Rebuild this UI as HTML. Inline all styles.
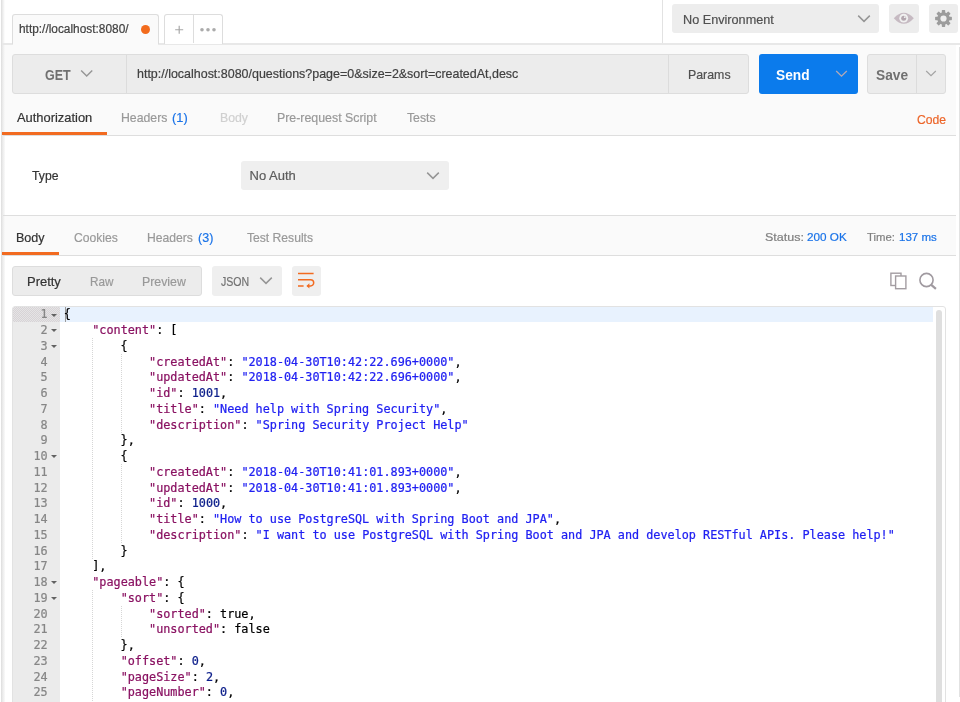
<!DOCTYPE html>
<html lang="en">
<head>
<meta charset="utf-8">
<title>Postman</title>
<style>
*{box-sizing:border-box;margin:0;padding:0}
html,body{width:960px;height:702px;overflow:hidden;background:#fff}
body{position:relative;font-family:"Liberation Sans",Arial,sans-serif;color:#505050;font-size:13px}
#root{position:absolute;left:0;top:0;width:960px;height:702px;will-change:transform}
.abs{position:absolute}
.t{position:absolute;white-space:nowrap;line-height:20px;height:20px;transform-origin:0 50%;-webkit-text-stroke:.2px}
/* frame */
#lshadow{left:1px;top:0;width:4px;height:702px;background:linear-gradient(90deg,#dcdcdc 0,#e9e9e9 35%,#fafafa 100%)}
#lshadowTop{left:1px;top:0;width:4px;height:43px;background:linear-gradient(90deg,#dcdcdc 0,#ececec 40%,#fff 100%)}
#rline{left:959px;top:47px;width:1px;height:650px;background:#e2e2e2}
.hline{position:absolute;height:1px;background:#dedede}
.band{position:absolute;left:3px;width:953px;background:#fafafa}
/* tabs */
.tab{position:absolute;top:14px;height:30px;background:#fafafa;border:1px solid #dddddd;border-bottom:none;border-radius:3px 3px 0 0}
/* buttons */
.btn{position:absolute;background:#ececec;border:1px solid #dddddd;border-radius:3px}
.flat{position:absolute;background:#efefef;border-radius:3px}
.o{color:#f26b3a}
.b{color:#1a73e8}
/* editor */
#ed{left:12px;top:305.5px;width:933.7px;height:420px;border:1px solid #e2e2e2;border-radius:3px;overflow:hidden;background:#fff}
#gut{left:0;top:0;width:46.5px;height:420px;background:#ebebeb}
#gact{left:0;top:0;width:46.5px;height:15.5px;background:repeating-conic-gradient(#d7d3d6 0 25%,#e5e4e5 0 50%) 0 0/2px 2px}
#lact{left:46.5px;top:0;width:873px;height:15.5px;background:#e8f2fe}
#nums,#code{position:absolute;top:.9px;font-family:"DejaVu Sans Mono","Liberation Mono",monospace;font-size:11.8px;line-height:15.75px;white-space:pre}
#nums{left:0;width:34.6px;text-align:right;color:#868686;-webkit-text-stroke:.2px}
#code{left:50.8px;color:#000;-webkit-text-stroke:.22px}
.k{color:#8a1262}
.s{color:#2020f2}
.n{color:#0b1d8a}
.fa{position:absolute;left:37.8px;width:0;height:0;border-left:3px solid transparent;border-right:3px solid transparent;border-top:3.4px solid #626262}
.ig{position:absolute;width:1px;background-image:linear-gradient(#d6d6d6 50%,transparent 50%);background-size:1px 2px}
</style>
</head>
<body>
<div id="root">
<!-- frame / backgrounds -->
<div class="band" style="top:45px;height:90px"></div>
<div class="band" style="top:216px;height:39px"></div>
<div class="abs" id="lshadow"></div>
<div class="abs" id="lshadowTop"></div>
<div class="abs" id="rline"></div>
<div class="hline" style="left:2px;top:43px;width:958px;height:2px;background:#e8e8e8"></div>
<div class="hline" style="left:3px;top:135px;width:953px"></div>
<div class="hline" style="left:3px;top:215px;width:953px"></div>
<div class="hline" style="left:3px;top:255px;width:953px"></div>

<!-- tab strip -->
<div class="tab" style="left:12px;width:147px;height:30px"></div>
<div class="abs" style="left:13px;top:43px;width:145px;height:2px;background:#fafafa"></div>
<div class="tab" style="left:164px;width:59px;height:30px;background:#fff"></div>
<div class="abs" style="left:140.8px;top:24.6px;width:9.2px;height:9.2px;border-radius:50%;background:#f26b1d"></div>
<div class="abs" style="left:193px;top:15px;width:1px;height:28px;background:#dddddd"></div>
<svg class="abs" style="left:173px;top:24px" width="12" height="12" viewBox="0 0 12 12"><path d="M6.2 1.7v8M2.2 5.7h8" stroke="#a6a6a6" stroke-width="1.15" fill="none"/></svg>
<svg class="abs" style="left:199px;top:26px" width="18" height="8" viewBox="0 0 18 8"><circle cx="3" cy="3.7" r="1.8" fill="#ababab"/><circle cx="9" cy="3.7" r="1.8" fill="#ababab"/><circle cx="15" cy="3.7" r="1.8" fill="#ababab"/></svg>

<!-- environment -->
<div class="abs" style="left:662px;top:0;width:1px;height:43px;background:#e2e2e2"></div>
<div class="flat" style="left:672px;top:4px;width:207px;height:29px;background:#ededed"></div>
<svg class="abs" style="left:857px;top:14px" width="14" height="10" viewBox="0 0 14 10"><path d="M1.2 1.6L7 7.4 12.8 1.6" stroke="#969696" stroke-width="1.5" fill="none"/></svg>
<div class="flat" style="left:889px;top:4px;width:30px;height:29px;background:#ededed"></div>
<svg class="abs" style="left:892px;top:11px" width="24" height="15" viewBox="892 11 24 15"><path d="M893.8 18.2Q903.8 7.2 913.8 18.2Q903.8 29.2 893.8 18.2Z" fill="#c6bac2"/><circle cx="903.7" cy="18.2" r="4.4" fill="#f0f0f0"/><circle cx="903.7" cy="18.2" r="2.5" fill="#b3a6ae"/><circle cx="904.8" cy="17.2" r=".9" fill="#f0f0f0"/></svg>
<div class="flat" style="left:929px;top:4px;width:29px;height:29px;background:#ededed"></div>
<svg class="abs" style="left:933.7px;top:9.1px" width="19" height="19" viewBox="-9.5 -9.5 19 19"><g fill="#9c9c9c"><circle r="6.2"/><g id="gt"><rect x="-1.7" y="-8.4" width="3.4" height="16.8" rx=".6"/></g><rect x="-1.7" y="-8.4" width="3.4" height="16.8" rx=".6" transform="rotate(45)"/><rect x="-1.7" y="-8.4" width="3.4" height="16.8" rx=".6" transform="rotate(90)"/><rect x="-1.7" y="-8.4" width="3.4" height="16.8" rx=".6" transform="rotate(135)"/></g><circle r="3.1" fill="#efefef"/></svg>

<!-- request bar -->
<div class="btn" style="left:12px;top:54px;width:737px;height:40px"></div>
<div class="abs" style="left:126px;top:55px;width:1px;height:38px;background:#dcdcdc"></div>
<div class="abs" style="left:668px;top:55px;width:1px;height:38px;background:#dcdcdc"></div>
<svg class="abs" style="left:80.4px;top:69.3px" width="13.4" height="9.6" viewBox="0 0 14 10"><path d="M1.2 1.6L7 7.4 12.8 1.6" stroke="#969696" stroke-width="1.5" fill="none"/></svg>
<div class="abs" style="left:759px;top:54px;width:99px;height:40px;border-radius:3px;background:#0b7bec"></div>
<svg class="abs" style="left:835px;top:69px" width="13" height="10" viewBox="0 0 13 10"><path d="M1.2 2L6.5 7.2 11.8 2" stroke="#b4a9b6" stroke-width="1.3" fill="none"/></svg>
<div class="btn" style="left:867px;top:54px;width:79px;height:40px"></div>
<div class="abs" style="left:916px;top:55px;width:1px;height:38px;background:#dcdcdc"></div>
<svg class="abs" style="left:925px;top:69px" width="12" height="9" viewBox="0 0 12 9"><path d="M1.2 2L6 6.6 10.8 2" stroke="#a4a4a4" stroke-width="1.2" fill="none"/></svg>

<!-- request tabs -->
<div class="abs" style="left:2px;top:132px;width:105px;height:3px;background:#f26b21"></div>

<!-- auth -->
<div class="flat" style="left:240.5px;top:161px;width:208.5px;height:29px"></div>
<svg class="abs" style="left:426px;top:171px" width="14" height="10" viewBox="0 0 14 10"><path d="M1.2 1.6L7 7.4 12.8 1.6" stroke="#969696" stroke-width="1.5" fill="none"/></svg>

<!-- response tabs -->
<div class="abs" style="left:2px;top:252px;width:57px;height:3px;background:#f26b21"></div>

<!-- view toolbar -->
<div class="btn" style="left:12px;top:266px;width:190px;height:30px"></div>
<div class="flat" style="left:212px;top:266px;width:70px;height:30px"></div>
<svg class="abs" style="left:259px;top:276px" width="14" height="10" viewBox="0 0 14 10"><path d="M1.2 1.6L7 7.4 12.8 1.6" stroke="#969696" stroke-width="1.5" fill="none"/></svg>
<div class="flat" style="left:291.5px;top:266px;width:29.5px;height:30px"></div>
<svg class="abs" style="left:296px;top:270px" width="20" height="20" viewBox="0 0 20 20"><path d="M2 3.6h15.6M2 9.7h12.6a3.1 3.1 0 0 1 0 6.2h-3.2M2 15.9h5.6" stroke="#f26b21" stroke-width="1.5" fill="none"/><path d="M13.4 13.2l-3 2.7 3 2.7z" fill="#f26b21"/></svg>
<svg class="abs" style="left:885px;top:268px" width="30" height="26" viewBox="885 268 30 26"><rect x="890.9" y="273.2" width="10.1" height="12.3" stroke="#a39da2" stroke-width="1.4" fill="none"/><rect x="895.6" y="276" width="10.3" height="12.7" stroke="#a39da2" stroke-width="1.4" fill="#fff"/></svg>
<svg class="abs" style="left:916px;top:270px" width="24" height="22" viewBox="0 0 24 22"><circle cx="10.5" cy="10" r="6.6" stroke="#a09aa0" stroke-width="1.6" fill="none"/><path d="M15.3 14.8l4.6 4" stroke="#a09aa0" stroke-width="2.2" fill="none"/></svg>

<!-- texts -->
<div class="t" style="left:19.01px;top:19px;font-size:12px;color:#404040;transform:scaleX(0.9891)">http://localhost:8080/</div>
<div class="t" style="left:682.53px;top:10px;font-size:13px;color:#505050;transform:scaleX(0.9739)">No Environment</div>
<div class="t" style="left:44.91px;top:65px;font-size:14px;font-weight:bold;-webkit-text-stroke:0;color:#707070;transform:scaleX(0.8929)">GET</div>
<div class="t" style="left:136.54px;top:64px;font-size:13px;color:#404040;transform:scaleX(0.9583)">http://localhost:8080/questions?page=0&amp;size=2&amp;sort=createdAt,desc</div>
<div class="t" style="left:687.55px;top:65px;font-size:13px;color:#505050;transform:scaleX(0.9512)">Params</div>
<div class="t" style="left:775.72px;top:65px;font-size:14px;font-weight:bold;-webkit-text-stroke:0;color:#ffffff;transform:scaleX(0.9788)">Send</div>
<div class="t" style="left:875.82px;top:65px;font-size:14px;font-weight:bold;-webkit-text-stroke:0;color:#707070;transform:scaleX(0.9806)">Save</div>
<div class="t" style="left:16.90px;top:108px;font-size:13px;color:#333333;transform:scaleX(0.9920)">Authorization</div>
<div class="t" style="left:120.76px;top:108px;font-size:13px;color:#999999;transform:scaleX(0.9437)">Headers</div>
<div class="t" style="left:171.51px;top:108px;font-size:13px;color:#1a73e8;transform:scaleX(0.9857)">(1)</div>
<div class="t" style="left:220.36px;top:108px;font-size:13px;color:#d0d0d0;transform:scaleX(0.9448)">Body</div>
<div class="t" style="left:277.45px;top:108px;font-size:13px;color:#999999;transform:scaleX(0.9510)">Pre-request Script</div>
<div class="t" style="left:407.40px;top:108px;font-size:13px;color:#999999;transform:scaleX(0.9400)">Tests</div>
<div class="t" style="left:917.03px;top:110px;font-size:12.5px;color:#ec6529;transform:scaleX(0.9724)">Code</div>
<div class="t" style="left:32.00px;top:166px;font-size:13px;color:#333333;transform:scaleX(0.9393)">Type</div>
<div class="t" style="left:249.50px;top:166px;font-size:13px;color:#5c5c5c;transform:scaleX(1.0000)">No Auth</div>
<div class="t" style="left:16.03px;top:228px;font-size:13px;color:#333333;transform:scaleX(0.9655)">Body</div>
<div class="t" style="left:73.57px;top:228px;font-size:13px;color:#999999;transform:scaleX(0.9348)">Cookies</div>
<div class="t" style="left:146.77px;top:228px;font-size:13px;color:#999999;transform:scaleX(0.9333)">Headers</div>
<div class="t" style="left:197.84px;top:228px;font-size:13px;color:#1a73e8;transform:scaleX(0.9643)">(3)</div>
<div class="t" style="left:247.00px;top:228px;font-size:13px;color:#999999;transform:scaleX(0.9329)">Test Results</div>
<div class="t" style="left:764.76px;top:227px;font-size:11px;color:#808080;transform:scaleX(1.1375)">Status:</div>
<div class="t" style="left:806.54px;top:227px;font-size:11px;color:#1a73e8;transform:scaleX(1.0639)">200 OK</div>
<div class="t" style="left:867.20px;top:227px;font-size:11px;color:#808080;transform:scaleX(1.0308)">Time:</div>
<div class="t" style="left:898.65px;top:227px;font-size:11px;color:#1a73e8;transform:scaleX(1.0486)">137 ms</div>
<div class="t" style="left:26.70px;top:272px;font-size:13px;color:#333333;transform:scaleX(0.9970)">Pretty</div>
<div class="t" style="left:89.70px;top:272px;font-size:13px;color:#999999;transform:scaleX(0.9000)">Raw</div>
<div class="t" style="left:142.35px;top:272px;font-size:13px;color:#999999;transform:scaleX(0.9489)">Preview</div>
<div class="t" style="left:221.00px;top:272px;font-size:13px;color:#707070;transform:scaleX(0.8147)">JSON</div>

<!-- editor -->
<div class="abs" id="ed">
<div class="abs" id="gut"></div>
<div class="abs" id="gact"></div>
<div class="abs" id="lact"></div>
<div class="abs" style="left:52px;top:0;width:1.2px;height:15.5px;background:#9a9a9a"></div>
<div class="abs" style="left:922.8px;top:3.5px;width:6px;height:430px;border-radius:3px;background:#dfdfdf"></div>
<div id="nums">1
2
3
4
5
6
7
8
9
10
11
12
13
14
15
16
17
18
19
20
21
22
23
24
25</div>
<div class="fa" style="top:7px"></div>
<div class="fa" style="top:22.75px"></div>
<div class="fa" style="top:38.5px"></div>
<div class="fa" style="top:148.75px"></div>
<div class="fa" style="top:274.75px"></div>
<div class="fa" style="top:290.5px"></div>
<div class="ig" style="left:79px;top:31.5px;height:220.5px"></div>
<div class="ig" style="left:79px;top:283.5px;height:140px"></div>
<div class="ig" style="left:107.6px;top:47.25px;height:78.75px"></div>
<div class="ig" style="left:107.6px;top:157.5px;height:78.75px"></div>
<div class="ig" style="left:107.6px;top:299.25px;height:31.5px"></div>
<div id="code">{
    <span class="k">"content"</span>: [
        {
            <span class="k">"createdAt"</span>: <span class="s">"2018-04-30T10:42:22.696+0000"</span>,
            <span class="k">"updatedAt"</span>: <span class="s">"2018-04-30T10:42:22.696+0000"</span>,
            <span class="k">"id"</span>: <span class="n">1001</span>,
            <span class="k">"title"</span>: <span class="s">"Need help with Spring Security"</span>,
            <span class="k">"description"</span>: <span class="s">"Spring Security Project Help"</span>
        },
        {
            <span class="k">"createdAt"</span>: <span class="s">"2018-04-30T10:41:01.893+0000"</span>,
            <span class="k">"updatedAt"</span>: <span class="s">"2018-04-30T10:41:01.893+0000"</span>,
            <span class="k">"id"</span>: <span class="n">1000</span>,
            <span class="k">"title"</span>: <span class="s">"How to use PostgreSQL with Spring Boot and JPA"</span>,
            <span class="k">"description"</span>: <span class="s">"I want to use PostgreSQL with Spring Boot and JPA and develop RESTful APIs. Please help!"</span>
        }
    ],
    <span class="k">"pageable"</span>: {
        <span class="k">"sort"</span>: {
            <span class="k">"sorted"</span>: true,
            <span class="k">"unsorted"</span>: false
        },
        <span class="k">"offset"</span>: <span class="n">0</span>,
        <span class="k">"pageSize"</span>: <span class="n">2</span>,
        <span class="k">"pageNumber"</span>: <span class="n">0</span>,</div>
</div>
</div>
</body>
</html>
